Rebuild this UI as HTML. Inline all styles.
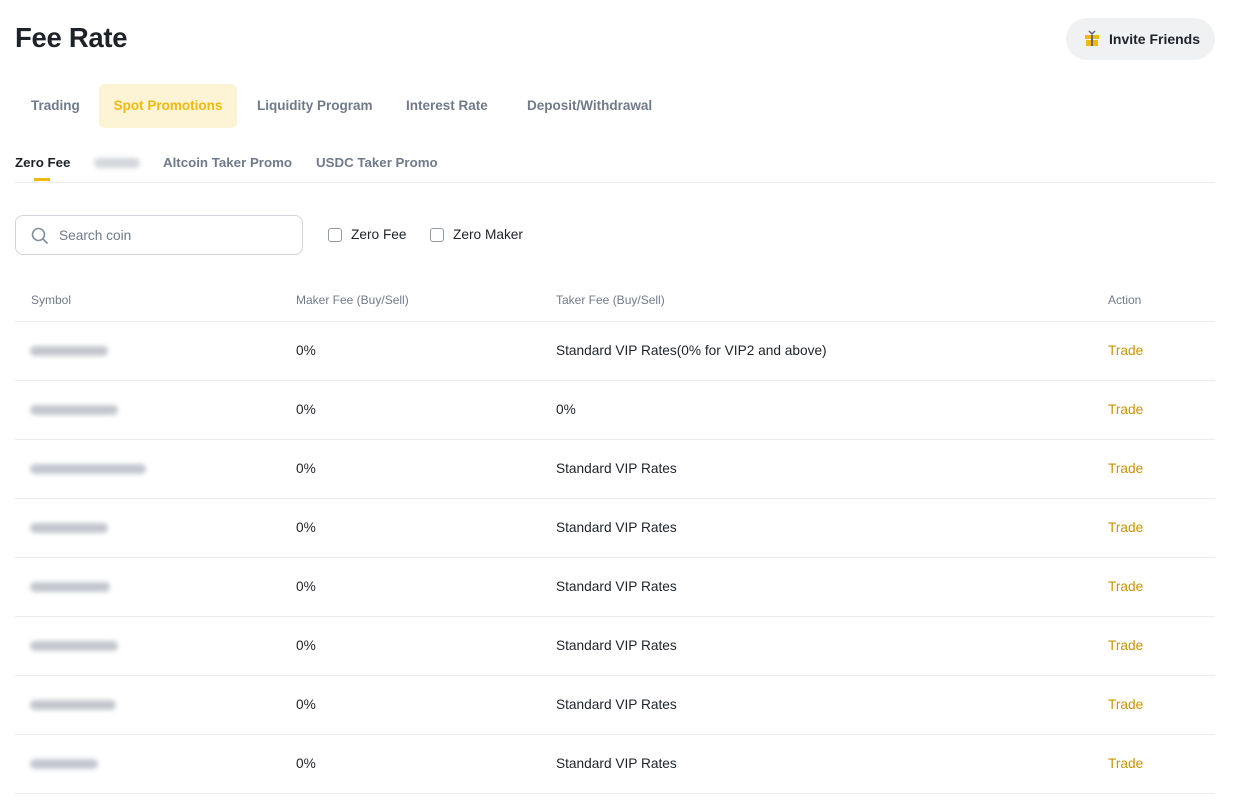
<!DOCTYPE html>
<html><head><meta charset="utf-8"><style>
*{margin:0;padding:0;box-sizing:border-box}
body{width:1240px;height:803px;background:#fff;font-family:"Liberation Sans",sans-serif;color:#1e2329;position:relative;overflow:hidden}
.abs{position:absolute;white-space:nowrap}
h1{position:absolute;left:15px;top:22px;font-size:27.5px;font-weight:bold;letter-spacing:-0.3px}
.inv{position:absolute;left:1066px;top:18px;width:149px;height:42px;border-radius:21px;background:#f0f1f2;font-size:14px;font-weight:bold;line-height:42px;padding-left:43px}
.tab{position:absolute;top:98px;font-size:13.5px;font-weight:bold;color:#707a8a}
.sp{position:absolute;left:99px;top:84px;width:138px;height:44px;background:#fdf4d6;border-radius:6px;color:#f0b90b;font-size:13.5px;font-weight:bold;text-align:center;line-height:44px}
.sub{position:absolute;top:155px;font-size:13.3px;font-weight:bold;color:#707a8a}
.blur{position:absolute;background:#c3c7cd;border-radius:5px;filter:blur(2.5px);height:10px}
.search{position:absolute;left:15px;top:215px;width:288px;height:40px;border:1px solid #d0d4da;border-radius:8px}
.cb{position:absolute;top:228px;width:14px;height:14px;border:1px solid #929aa5;border-radius:3px}
.th{position:absolute;top:293px;font-size:12px;color:#707a8a}
.line{position:absolute;left:15px;width:1200px;height:1px;background:#eaecef}
.c{position:absolute;font-size:13.7px;color:#1e2329}
.tr{position:absolute;left:1108px;font-size:13.7px;color:#c99400}
</style></head><body>
<h1>Fee Rate</h1>
<div class="inv"><svg class="abs" style="left:18px;top:12px" width="16" height="17" viewBox="0 0 16 17"><path d="M5 1l3 3 3-3" stroke="#5e6673" stroke-width="1.5" fill="none"/><rect x="1" y="5" width="14" height="4" fill="#f0b90b"/><rect x="2" y="10" width="12" height="6" fill="#f0b90b"/><rect x="7" y="5" width="2" height="11" fill="#5e6673"/></svg>Invite Friends</div>
<div class="tab" style="left:31px">Trading</div>
<div class="sp">Spot Promotions</div>
<div class="tab" style="left:257px">Liquidity Program</div>
<div class="tab" style="left:406px">Interest Rate</div>
<div class="tab" style="left:527px">Deposit/Withdrawal</div>
<div class="sub" style="left:15px;color:#1e2329">Zero Fee</div>
<div class="blur" style="left:94px;top:158px;width:46px;background:#d3d6db"></div>
<div class="sub" style="left:163px">Altcoin Taker Promo</div>
<div class="sub" style="left:316px">USDC Taker Promo</div>
<div class="abs" style="left:34px;top:178px;width:16px;height:3px;background:#f0b90b"></div>
<div class="line" style="top:182px"></div>
<div class="search"><svg class="abs" style="left:15px;top:11px" width="18" height="18" viewBox="0 0 18 18"><circle cx="7.5" cy="7.5" r="6" stroke="#848e9c" stroke-width="1.6" fill="none"/><path d="M12 12l4.5 4.5" stroke="#848e9c" stroke-width="1.6"/></svg><span class="abs" style="left:43px;top:12px;font-size:13.7px;color:#707a8a">Search coin</span></div>
<div class="cb" style="left:328px"></div><div class="c" style="left:351px;top:227px">Zero Fee</div>
<div class="cb" style="left:430px"></div><div class="c" style="left:453px;top:227px">Zero Maker</div>
<div class="th" style="left:31px">Symbol</div>
<div class="th" style="left:296px">Maker Fee (Buy/Sell)</div>
<div class="th" style="left:556px">Taker Fee (Buy/Sell)</div>
<div class="th" style="left:1108px">Action</div>
<div class="line" style="top:321px"></div>
<div class="line" style="top:380px"></div><div class="line" style="top:439px"></div><div class="line" style="top:498px"></div><div class="line" style="top:557px"></div><div class="line" style="top:616px"></div><div class="line" style="top:675px"></div><div class="line" style="top:734px"></div><div class="line" style="top:793px"></div>
<div class="blur" style="left:30px;top:346px;width:78px"></div>
<div class="blur" style="left:30px;top:405px;width:88px"></div>
<div class="blur" style="left:30px;top:464px;width:116px"></div>
<div class="blur" style="left:30px;top:523px;width:78px"></div>
<div class="blur" style="left:30px;top:582px;width:80px"></div>
<div class="blur" style="left:30px;top:641px;width:88px"></div>
<div class="blur" style="left:30px;top:700px;width:86px"></div>
<div class="blur" style="left:30px;top:759px;width:68px"></div>
<div class="c" style="left:296px;top:343px">0%</div><div class="c" style="left:556px;top:343px">Standard VIP Rates(0% for VIP2 and above)</div><div class="tr" style="top:343px">Trade</div>
<div class="c" style="left:296px;top:402px">0%</div><div class="c" style="left:556px;top:402px">0%</div><div class="tr" style="top:402px">Trade</div>
<div class="c" style="left:296px;top:461px">0%</div><div class="c" style="left:556px;top:461px">Standard VIP Rates</div><div class="tr" style="top:461px">Trade</div>
<div class="c" style="left:296px;top:520px">0%</div><div class="c" style="left:556px;top:520px">Standard VIP Rates</div><div class="tr" style="top:520px">Trade</div>
<div class="c" style="left:296px;top:579px">0%</div><div class="c" style="left:556px;top:579px">Standard VIP Rates</div><div class="tr" style="top:579px">Trade</div>
<div class="c" style="left:296px;top:638px">0%</div><div class="c" style="left:556px;top:638px">Standard VIP Rates</div><div class="tr" style="top:638px">Trade</div>
<div class="c" style="left:296px;top:697px">0%</div><div class="c" style="left:556px;top:697px">Standard VIP Rates</div><div class="tr" style="top:697px">Trade</div>
<div class="c" style="left:296px;top:756px">0%</div><div class="c" style="left:556px;top:756px">Standard VIP Rates</div><div class="tr" style="top:756px">Trade</div>
</body></html>
